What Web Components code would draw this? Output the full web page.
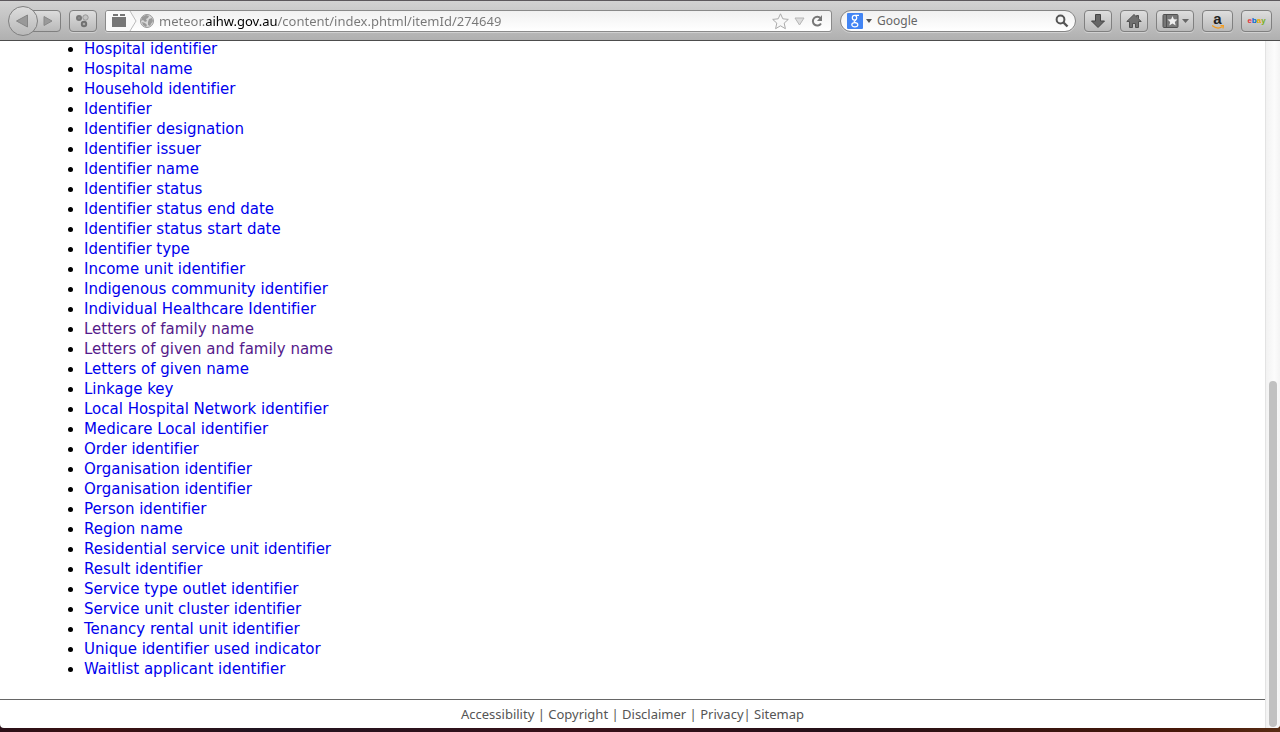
<!DOCTYPE html>
<html lang="en">
<head>
<meta charset="utf-8">
<title>METeOR</title>
<style>
  html, body { height: 100%; }
  body {
    margin: 0;
    overflow: hidden;
    font-family: "DejaVu Sans", sans-serif;
    font-variant-ligatures: none;
  }
  browser-window { height: 100%; }
</style>
</head>
<body>
<browser-window>
  <browser-toolbar slot="toolbar"></browser-toolbar>
  <identifier-list></identifier-list>
  <page-footer></page-footer>
</browser-window>

<script>
class BrowserWindow extends HTMLElement {
  connectedCallback() {
    this.attachShadow({ mode: 'open' });
    this.shadowRoot.innerHTML = `
      <style>
        :host {
          display: flex;
          flex-direction: column;
          box-sizing: border-box;
          padding-bottom: 4px;
          background: linear-gradient(90deg, #2a1018, #3d1010 8%, #201420 20%, #381018 45%, #241018 65%, #481808 93%, #582c14);
        }
        .view {
          flex: 1;
          min-height: 0;
          display: flex;
          background: #fff;
          border-radius: 0 0 4px 4px;
          overflow: hidden;
        }
        .page {
          flex: 1;
          min-width: 0;
          display: flex;
          flex-direction: column;
          justify-content: flex-end;
          overflow: hidden;
        }
        .scrollbar {
          width: 15px;
          box-sizing: border-box;
          display: flex;
          flex-direction: column;
          justify-content: flex-end;
          align-items: center;
          padding-bottom: 1px;
          border-left: 1px solid #e3e3e3;
          background: linear-gradient(90deg, #f2f2f2, #fcfcfc 60%, #f4f4f4);
        }
        .thumb {
          width: 8px;
          height: 50.5%;
          border-radius: 4px;
          background: #c1c1c1;
        }
      </style>
      <slot name="toolbar"></slot>
      <div class="view">
        <main class="page"><slot></slot></main>
        <div class="scrollbar"><div class="thumb"></div></div>
      </div>
    `;
  }
}
customElements.define('browser-window', BrowserWindow);

class ToolButton extends HTMLElement {
  connectedCallback() {
    this.attachShadow({ mode: 'open' });
    this.shadowRoot.innerHTML = `
      <style>
        :host { display: block; width: 28px; height: 22px; }
        :host([size="medium"]) { width: 31px; }
        :host([size="wide"]) { width: 38px; }
        button {
          width: 100%;
          height: 100%;
          display: flex;
          align-items: center;
          justify-content: center;
          box-sizing: border-box;
          padding: 0;
          border: 1px solid #808080;
          border-radius: 4px;
          background: linear-gradient(#dedede, #bababa);
          box-shadow: 0 1px 0 #d0d0d0;
          font: inherit;
        }
      </style>
      <button aria-label="${this.getAttribute('label')}"><slot></slot></button>
    `;
  }
}
customElements.define('tool-button', ToolButton);

class NavButtons extends HTMLElement {
  connectedCallback() {
    this.attachShadow({ mode: 'open' });
    this.shadowRoot.innerHTML = `
      <style>
        :host { display: flex; align-items: center; height: 30px; }
        button {
          display: flex;
          align-items: center;
          justify-content: center;
          box-sizing: border-box;
          padding: 0;
          border: 1px solid #808080;
          background: linear-gradient(#dcdcdc, #b9b9b9);
        }
        .back {
          width: 30px;
          height: 30px;
          border-radius: 50%;
          z-index: 1;
        }
        .forward {
          width: 30px;
          height: 22px;
          margin-left: -7px;
          padding-left: 3px;
          border-radius: 0 4px 4px 0;
        }
      </style>
      <button class="back" aria-label="Back">
        <svg width="14" height="14" viewBox="0 0 14 14"><path d="M11.500 1v12L.5 7z" fill="#999" stroke="#858585"/></svg>
      </button>
      <button class="forward" aria-label="Forward">
        <svg width="10" height="10" viewBox="0 0 10 10"><path d="M1 .5v9l8-4.500z" fill="#9a9a9a" stroke="#888"/></svg>
      </button>
    `;
  }
}
customElements.define('nav-buttons', NavButtons);

class AddressBar extends HTMLElement {
  connectedCallback() {
    this.attachShadow({ mode: 'open' });
    this.shadowRoot.innerHTML = `
      <style>
        :host {
          flex: 1;
          min-width: 0;
          display: flex;
          align-items: center;
          height: 22px;
          box-sizing: border-box;
          border: 1px solid #8a8a8a;
          border-radius: 3px;
          background: linear-gradient(#f1f1f1, #fff);
          box-shadow: 0 1px 0 #d0d0d0;
          overflow: hidden;
        }
        svg { flex: none; display: block; }
        /* the host name is darker than the rest of the address */
        input {
          flex: 1;
          min-width: 0;
          margin: 0 0 0 5px;
          padding: 0;
          border: 0;
          outline: 0;
          font: 13px/20px "Lucida Grande", "Noto Sans", sans-serif;
          color: #777;
          background: linear-gradient(90deg, #777 46px, #000 46px, #000 118px, #777 118px);
          -webkit-background-clip: text;
          background-clip: text;
          -webkit-text-fill-color: transparent;
        }
        button {
          display: flex;
          padding: 0;
          border: 0;
          background: none;
        }
        .actions { display: flex; align-items: center; gap: 5px; padding-right: 7px; }
      </style>
      <svg width="32" height="20" viewBox="0 0 32 20">
        <path d="M0 0H24L30 10L24 20H0z" fill="#fafafa"/>
        <path d="M24 0L30 10L24 20" fill="none" stroke="#bbb"/>
        <path d="M6 6h14v10H6zM7 3h5v2H7zM14 3h5v2h-5z" fill="#777"/>
      </svg>
      <svg width="16" height="20" viewBox="0 0 16 20">
        <circle cx="9" cy="10" r="6.5" fill="#d8d8d8" stroke="#999"/>
        <path d="M4 6l4-2 3 1-1 2-2 1 1 2-2 1-2-2-2 1zM11 8l3-1 1 3-2 3-1 2-2-1v-3zM4 11l3 1 2 2-1 2-3-2z" fill="#999"/>
      </svg>
      <input type="text" aria-label="Address" value="meteor.aihw.gov.au/content/index.phtml/itemId/274649">
      <div class="actions">
        <button aria-label="Bookmark">
          <svg width="17" height="17" viewBox="0 0 17 17"><path d="M8.500 .8l2.300 5 5.500.6-4.100 3.700 1.200 5.600-4.900-2.900-4.900 2.900 1.200-5.600L.7 6.400l5.500-.6z" fill="#f8f8f8" stroke="#aaa"/></svg>
        </button>
        <button aria-label="History">
          <svg width="11" height="9" viewBox="0 0 11 9"><path d="M1 1h9L5.500 8z" fill="#ddd" stroke="#b5b5b5"/></svg>
        </button>
        <button aria-label="Reload">
          <svg width="14" height="14" viewBox="0 0 14 14"><path d="M10.600 4.300A4.400 4.400 0 1 0 11 9.500" fill="none" stroke="#777" stroke-width="2"/><path d="M12 1v6H7z" fill="#777"/></svg>
        </button>
      </div>
    `;
  }
}
customElements.define('address-bar', AddressBar);

class SearchBox extends HTMLElement {
  connectedCallback() {
    this.attachShadow({ mode: 'open' });
    this.shadowRoot.innerHTML = `
      <style>
        :host {
          display: flex;
          align-items: center;
          width: 236px;
          height: 22px;
          box-sizing: border-box;
          padding: 0 6px;
          border: 1px solid #858585;
          border-radius: 11px;
          background: linear-gradient(#f1f1f1, #fff);
          box-shadow: 0 1px 0 #d0d0d0;
        }
        button {
          display: flex;
          align-items: center;
          gap: 2px;
          padding: 0;
          border: 0;
          background: none;
        }
        input {
          flex: 1;
          min-width: 0;
          margin: 0 0 0 4px;
          padding: 0;
          border: 0;
          outline: 0;
          background: none;
          font: 12px/20px "Lucida Grande", "Noto Sans", sans-serif;
        }
        input::placeholder { color: #666; opacity: 1; }
      </style>
      <button aria-label="Search engine">
        <svg width="16" height="16" viewBox="0 0 16 16">
          <rect width="16" height="16" rx="1" fill="#4285f4"/>
          <g fill="none" stroke="#fff" stroke-width="1.200">
            <ellipse cx="7.500" cy="4.800" rx="2.200" ry="2.400"/>
            <path d="M8 2.300h4M9 7.200c-3 1-2 2 0 2.600"/>
            <ellipse cx="7.800" cy="11.700" rx="3" ry="2.100"/>
          </g>
        </svg>
        <svg width="8" height="5" viewBox="0 0 8 5"><path d="M1 0h6L4 4z" fill="#555"/></svg>
      </button>
      <input type="search" aria-label="Search" placeholder="Google">
      <button aria-label="Go">
        <svg width="14" height="14" viewBox="0 0 14 14"><circle cx="5.500" cy="5.500" r="3.900" fill="none" stroke="#555" stroke-width="2"/><path d="M8.500 8.500l4 4" stroke="#555" stroke-width="2.400"/></svg>
      </button>
    `;
  }
}
customElements.define('search-box', SearchBox);

class BrowserToolbar extends HTMLElement {
  connectedCallback() {
    this.attachShadow({ mode: 'open' });
    this.shadowRoot.innerHTML = `
      <style>
        :host {
          flex: none;
          display: flex;
          align-items: center;
          gap: 8px;
          height: 41px;
          box-sizing: border-box;
          padding: 1px 8px 0;
          border-top: 1px solid #5c585c;
          border-bottom: 1px solid #4d4d4d;
          background: linear-gradient(#d2d2d2, #b0b0b0);
        }
        .amazon, .ebay {
          font-family: "Liberation Sans", Arial, sans-serif;
          font-weight: bold;
        }
        .amazon {
          display: flex;
          flex-direction: column;
          align-items: center;
          font-size: 15px;
          line-height: 12px;
          color: #222;
        }
        .ebay { font-size: 8px; line-height: 12px; }
      </style>
      <nav-buttons></nav-buttons>
      <tool-button label="Share">
        <svg width="16" height="16" viewBox="0 0 16 16">
          <circle cx="4" cy="5" r="3" fill="#777"/><circle cx="10.500" cy="4.500" r="2.700" fill="#c4c4c4" stroke="#999"/><circle cx="9" cy="11" r="3.200" fill="#707070"/>
          <circle cx="4" cy="5" r="1.200" fill="#888"/><circle cx="9" cy="11" r="1.300" fill="#aaa"/>
        </svg>
      </tool-button>
      <address-bar></address-bar>
      <search-box></search-box>
      <tool-button label="Downloads">
        <svg width="16" height="16" viewBox="0 0 16 16"><path d="M5.500 1.500h5V8h4L8 14.500 1.500 8h4z" fill="#666" stroke="#444"/></svg>
      </tool-button>
      <tool-button label="Home">
        <svg width="16" height="16" viewBox="0 0 16 16"><path d="M8 1.500L.8 8.500h2.700v6h3v-4h3v4h3v-6h2.700L12.500 5.800V2.500h-2v1.400z" fill="#707070" stroke="#505050"/></svg>
      </tool-button>
      <tool-button label="Bookmarks" size="wide">
        <svg width="27" height="16" viewBox="0 0 27 16">
          <rect x="1" y="1.500" width="15" height="13" rx="1" fill="#777" stroke="#505050"/>
          <path d="M4.500 2v12" stroke="#505050"/>
          <path d="M10.500 3l1.400 3.300 3.600.3-2.700 2.300.9 3.600-3.200-2-3.200 2 .9-3.600L5.500 6.600l3.600-.3z" fill="#eee"/>
          <path d="M20 6h7l-3.500 4z" fill="#666"/>
        </svg>
      </tool-button>
      <tool-button label="Amazon" size="medium">
        <div class="amazon">
          <span>a</span>
          <svg width="12" height="4" viewBox="0 0 12 4"><path d="M0 .5q5.500 4.500 10.500 1M8.500 .5h3L11 3.500" fill="none" stroke="#f39c1f" stroke-width="1.200"/></svg>
        </div>
      </tool-button>
      <tool-button label="eBay" size="medium">
        <div class="ebay"><span style="color:#e53238">e</span><span style="color:#0064d2">b</span><span style="color:#e8a800">a</span><span style="color:#78b020">y</span></div>
      </tool-button>
    `;
  }
}
customElements.define('browser-toolbar', BrowserToolbar);

const ITEMS = [
  'Hospital identifier', 'Hospital name', 'Household identifier', 'Identifier',
  'Identifier designation', 'Identifier issuer', 'Identifier name', 'Identifier status',
  'Identifier status end date', 'Identifier status start date', 'Identifier type',
  'Income unit identifier', 'Indigenous community identifier', 'Individual Healthcare Identifier',
  'Letters of family name', 'Letters of given and family name', 'Letters of given name',
  'Linkage key', 'Local Hospital Network identifier', 'Medicare Local identifier',
  'Order identifier', 'Organisation identifier', 'Organisation identifier',
  'Person identifier', 'Region name', 'Residential service unit identifier',
  'Result identifier', 'Service type outlet identifier', 'Service unit cluster identifier',
  'Tenancy rental unit identifier', 'Unique identifier used indicator', 'Waitlist applicant identifier'
];
const SEEN = ['Letters of family name', 'Letters of given and family name'];

class IdentifierList extends HTMLElement {
  connectedCallback() {
    this.attachShadow({ mode: 'open' });
    this.shadowRoot.innerHTML = `
      <style>
        :host { display: block; flex: none; }
        ul {
          margin: 0 0 20px;
          padding-left: 84px;
          font-size: 15px;
          line-height: 20px;
        }
        a { color: #0000ee; text-decoration: none; }
        a.seen { color: #551a8b; }
      </style>
      <ul>
        ${ITEMS.map(name => `<li><a href="#"${SEEN.includes(name) ? ' class="seen"' : ''}>${name}</a></li>`).join('')}
      </ul>
    `;
  }
}
customElements.define('identifier-list', IdentifierList);

class PageFooter extends HTMLElement {
  connectedCallback() {
    this.attachShadow({ mode: 'open' });
    this.shadowRoot.innerHTML = `
      <style>
        :host {
          display: block;
          flex: none;
          padding: 6px 0;
          border-top: 1px solid #666;
          font: 13px/16px "Noto Sans", sans-serif;
          text-align: center;
          color: #555;
        }
        a { color: inherit; text-decoration: none; }
      </style>
      <footer>
        <a href="#">Accessibility</a> | <a href="#">Copyright</a> | <a href="#">Disclaimer</a> | <a href="#">Privacy</a>| <a href="#">Sitemap</a>
      </footer>
    `;
  }
}
customElements.define('page-footer', PageFooter);
</script>
</body>
</html>
